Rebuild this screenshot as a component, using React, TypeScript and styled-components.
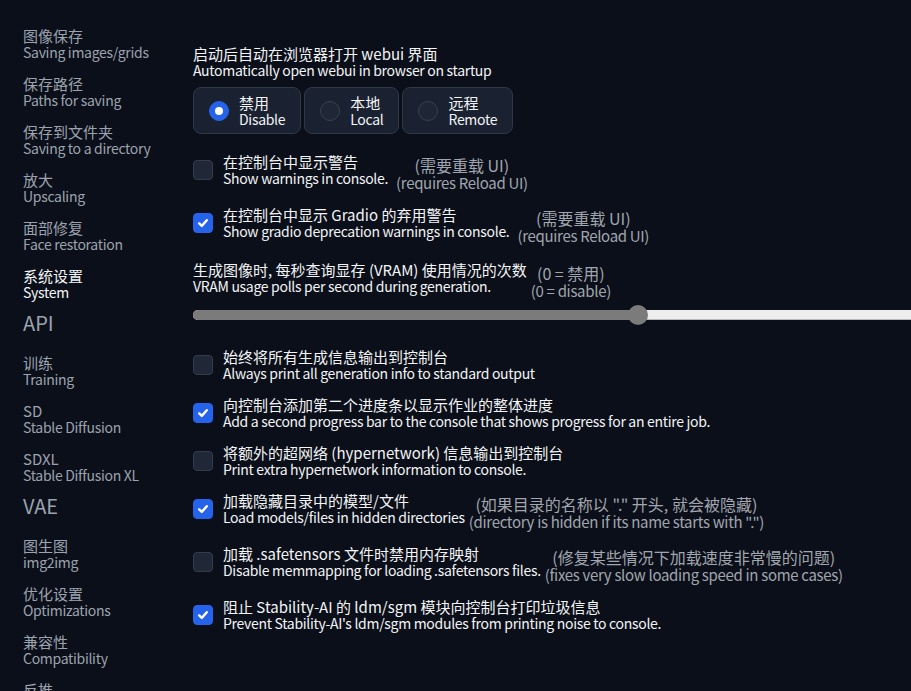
import React from "react";
import styled, { createGlobalStyle } from "styled-components";

const GlobalStyle = createGlobalStyle`
  html, body {
    margin: 0;
    padding: 0;
    background: #0b0f19;
    overflow: hidden;
  }
  body {
    font-family: "Noto Sans CJK SC", "Noto Sans", sans-serif;
    color: #f3f4f6;
    -webkit-font-smoothing: antialiased;
  }
`;

const Page = styled.div`
  display: flex;
  width: 911px;
  height: 691px;
  overflow: hidden;
`;

const Sidebar = styled.nav`
  flex: 0 0 170px;
  padding: 28px 0 0 23px;
  display: flex;
  flex-direction: column;
  gap: 16px;
`;

const NavItem = styled.div<{ $active?: boolean }>`
  display: flex;
  flex-direction: column;
  font-size: 15px;
  line-height: 16px;
  white-space: nowrap;
  color: ${(p) => (p.$active ? "#f3f4f6" : "#9ca3af")};
`;

const NavHeading = styled.div`
  font-size: 20px;
  line-height: 13px;
  padding-bottom: 10px;
  color: #9ca3af;
`;

const Main = styled.main`
  flex: 0 0 740px;
  padding-top: 46px;
  display: flex;
  flex-direction: column;
  gap: 16px;
`;

const FieldGroup = styled.div`
  display: flex;
  flex-direction: column;
  gap: 9px;
  margin-bottom: 4px;
`;

const TwoLine = styled.div`
  display: flex;
  flex-direction: column;
  font-size: 15px;
  line-height: 16px;
  white-space: nowrap;
`;

const En = styled.span`
  font-size: 14px;
  letter-spacing: -0.3px;
`;

const RadioGroup = styled.div`
  display: flex;
  gap: 3px;
`;

const RadioOption = styled.label`
  display: flex;
  align-items: center;
  gap: 10px;
  padding: 0 15px;
  background: #1a2130;
  border: 1px solid #2f3847;
  border-radius: 8px;
  height: 47px;
  box-sizing: border-box;
`;

const RadioDot = styled.span<{ $checked?: boolean }>`
  width: 20px;
  height: 20px;
  border-radius: 50%;
  box-sizing: border-box;
  flex: 0 0 20px;
  display: flex;
  align-items: center;
  justify-content: center;
  background: ${(p) => (p.$checked ? "#2563eb" : "#1f2737")};
  border: 1px solid ${(p) => (p.$checked ? "#2563eb" : "#364153")};
  &::after {
    content: "";
    display: ${(p) => (p.$checked ? "block" : "none")};
    width: 8px;
    height: 8px;
    border-radius: 50%;
    background: #ffffff;
  }
`;

const Row = styled.div`
  display: flex;
  align-items: flex-start;
`;

const CheckLabel = styled.label`
  display: flex;
  align-items: center;
  gap: 10px;
`;

const Box = styled.span<{ $checked?: boolean }>`
  width: 20px;
  height: 20px;
  flex: 0 0 20px;
  box-sizing: border-box;
  border-radius: 4px;
  display: flex;
  align-items: center;
  justify-content: center;
  background: ${(p) => (p.$checked ? "#2563eb" : "#202837")};
  border: 1px solid ${(p) => (p.$checked ? "#2563eb" : "#333c4b")};
`;

const Note = styled.div<{ $gap: number }>`
  display: flex;
  flex-direction: column;
  align-items: center;
  margin-left: ${(p) => p.$gap}px;
  margin-top: 3px;
  font-size: 16px;
  line-height: 17px;
  white-space: nowrap;
  color: #a1a6ae;
`;

const NoteEn = styled.span`
  font-size: 15px;
  letter-spacing: -0.32px;
`;

const SliderSection = styled.div`
  display: flex;
  flex-direction: column;
  gap: 6px;
  margin-top: 2px;
  padding-bottom: 8px;
`;

const SliderTrack = styled.div`
  position: relative;
  height: 20px;
  display: flex;
  align-items: center;
`;

const Rail = styled.div`
  width: 100%;
  height: 10px;
  border-radius: 5px;
  background: #eeeeee;
  box-shadow: inset 0 -1px 0 #b9b9b9;
  overflow: hidden;
`;

const Fill = styled.div`
  height: 100%;
  background: #7b7b7b;
`;

const Thumb = styled.div`
  position: absolute;
  top: 0;
  width: 20px;
  height: 20px;
  margin-left: -10px;
  border-radius: 50%;
  background: #7b7b7b;
`;

const Check = () => (
  <svg width="12" height="12" viewBox="0 0 12 12" fill="none">
    <path d="M2.2 6.4 L4.8 8.9 L9.8 3.2" stroke="#fff" strokeWidth="2.4" strokeLinecap="round" strokeLinejoin="round" />
  </svg>
);

type NavEntry = { zh?: string; en?: string; single?: string; active?: boolean };

const nav: NavEntry[] = [
  { zh: "图像保存", en: "Saving images/grids" },
  { zh: "保存路径", en: "Paths for saving" },
  { zh: "保存到文件夹", en: "Saving to a directory" },
  { zh: "放大", en: "Upscaling" },
  { zh: "面部修复", en: "Face restoration" },
  { zh: "系统设置", en: "System", active: true },
  { single: "API" },
  { zh: "训练", en: "Training" },
  { zh: "SD", en: "Stable Diffusion" },
  { zh: "SDXL", en: "Stable Diffusion XL" },
  { single: "VAE" },
  { zh: "图生图", en: "img2img" },
  { zh: "优化设置", en: "Optimizations" },
  { zh: "兼容性", en: "Compatibility" },
  { zh: "反推", en: "Interrogate" },
];

type Setting = {
  zh: string;
  en: string;
  checked: boolean;
  note?: [string, string];
  gap?: number;
};

const reload: [string, string] = ["(需要重载 UI)", "(requires Reload UI)"];

const top: Setting[] = [
  { zh: "在控制台中显示警告", en: "Show warnings in console.", checked: false, note: reload, gap: 8 },
  { zh: "在控制台中显示 Gradio 的弃用警告", en: "Show gradio deprecation warnings in console.", checked: true, note: reload, gap: 8 },
];

const bottom: Setting[] = [
  { zh: "始终将所有生成信息输出到控制台", en: "Always print all generation info to standard output", checked: false },
  { zh: "向控制台添加第二个进度条以显示作业的整体进度", en: "Add a second progress bar to the console that shows progress for an entire job.", checked: true },
  { zh: "将额外的超网络 (hypernetwork) 信息输出到控制台", en: "Print extra hypernetwork information to console.", checked: false },
  {
    zh: "加载隐藏目录中的模型/文件",
    en: "Load models/files in hidden directories",
    checked: true,
    note: ['(如果目录的名称以 "." 开头, 就会被隐藏)', '(directory is hidden if its name starts with ".")'],
    gap: 4,
  },
  {
    zh: "加载 .safetensors 文件时禁用内存映射",
    en: "Disable memmapping for loading .safetensors files.",
    checked: false,
    note: ["(修复某些情况下加载速度非常慢的问题)", "(fixes very slow loading speed in some cases)"],
    gap: 4,
  },
  { zh: "阻止 Stability-AI 的 ldm/sgm 模块向控制台打印垃圾信息", en: "Prevent Stability-AI's ldm/sgm modules from printing noise to console.", checked: true },
];

const NoteBlock: React.FC<{ note: [string, string]; gap: number }> = ({ note, gap }) => (
  <Note $gap={gap}>
    <span>{note[0]}</span>
    <NoteEn>{note[1]}</NoteEn>
  </Note>
);

const SettingRow: React.FC<{ s: Setting }> = ({ s }) => (
  <Row>
    <CheckLabel>
      <Box $checked={s.checked}>{s.checked && <Check />}</Box>
      <TwoLine>
        <span>{s.zh}</span>
        <En>{s.en}</En>
      </TwoLine>
    </CheckLabel>
    {s.note && <NoteBlock note={s.note} gap={s.gap ?? 4} />}
  </Row>
);

const radios = [
  { zh: "禁用", en: "Disable", checked: true },
  { zh: "本地", en: "Local", checked: false },
  { zh: "远程", en: "Remote", checked: false },
];

export default function App() {
  const sliderValue = 0.601;
  return (
    <>
      <GlobalStyle />
      <Page>
        <Sidebar>
          {nav.map((n, i) =>
            n.single ? (
              <NavHeading key={i}>{n.single}</NavHeading>
            ) : (
              <NavItem key={i} $active={n.active}>
                <span>{n.zh}</span>
                <En>{n.en}</En>
              </NavItem>
            )
          )}
        </Sidebar>
        <Main>
          <FieldGroup>
            <TwoLine>
              <span>启动后自动在浏览器打开 webui 界面</span>
              <En>Automatically open webui in browser on startup</En>
            </TwoLine>
            <RadioGroup>
              {radios.map((r) => (
                <RadioOption key={r.en}>
                  <RadioDot $checked={r.checked} />
                  <TwoLine>
                    <span>{r.zh}</span>
                    <En>{r.en}</En>
                  </TwoLine>
                </RadioOption>
              ))}
            </RadioGroup>
          </FieldGroup>
          {top.map((s) => (
            <SettingRow key={s.en} s={s} />
          ))}
          <SliderSection>
            <Row>
              <TwoLine>
                <span>生成图像时, 每秒查询显存 (VRAM) 使用情况的次数</span>
                <En>VRAM usage polls per second during generation.</En>
              </TwoLine>
              <NoteBlock note={["(0 = 禁用)", "(0 = disable)"]} gap={4} />
            </Row>
            <SliderTrack>
              <Rail>
                <Fill style={{ width: `${sliderValue * 100}%` }} />
              </Rail>
              <Thumb style={{ left: `${sliderValue * 100}%` }} />
            </SliderTrack>
          </SliderSection>
          {bottom.map((s) => (
            <SettingRow key={s.en} s={s} />
          ))}
        </Main>
      </Page>
    </>
  );
}
